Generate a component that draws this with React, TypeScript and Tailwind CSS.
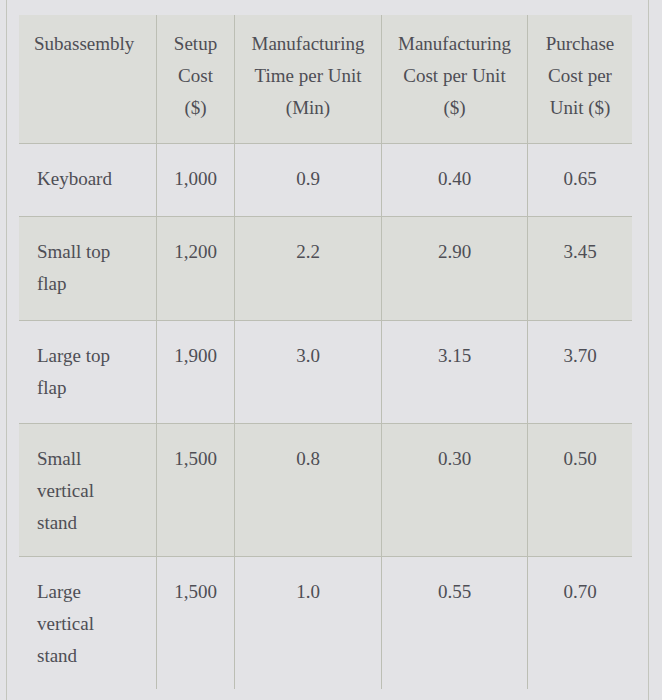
import React from "react";

const cols = ["w-[137px]", "w-[78px]", "w-[147px]", "w-[146px]", "w-[105px]"];

type Row = { cells: React.ReactNode[]; shaded: boolean; pb: string; last?: boolean };

const header: React.ReactNode[] = [
  "Subassembly",
  <>Setup<br />Cost<br />($)</>,
  <>Manufacturing<br />Time per Unit<br />(Min)</>,
  <>Manufacturing<br />Cost per Unit<br />($)</>,
  <>Purchase<br />Cost per<br />Unit ($)</>,
];

const rows: Row[] = [
  { cells: ["Keyboard", "1,000", "0.9", "0.40", "0.65"], shaded: false, pb: "pb-[21px]" },
  { cells: [<>Small top<br />flap</>, "1,200", "2.2", "2.90", "3.45"], shaded: true, pb: "pb-[20px]" },
  { cells: [<>Large top<br />flap</>, "1,900", "3.0", "3.15", "3.70"], shaded: false, pb: "pb-[19px]" },
  { cells: [<>Small<br />vertical<br />stand</>, "1,500", "0.8", "0.30", "0.50"], shaded: true, pb: "pb-[17px]" },
  { cells: [<>Large<br />vertical<br />stand</>, "1,500", "1.0", "0.55", "0.70"], shaded: false, pb: "pb-[17px]", last: true },
];

export default function App() {
  return (
    <div
      className="w-[662px] h-[700px] overflow-hidden bg-[#e3e3e6] text-[#4e4e55] pl-[6px]"
      style={{ fontFamily: '"Liberation Serif", "Times New Roman", serif' }}
    >
      <div className="w-[643px] h-[700px] border-l border-r border-[#c3c5bd] pl-[12px] pt-[15px]">
        <div className="flex flex-col w-[613px] text-[19px] leading-[32px]">
          <div className="flex bg-[#dcddd9] border-b border-[#bcbeb4]">
            {header.map((h, i) => (
              <div
                key={i}
                className={`${cols[i]} pt-[13px] pb-[19px] ${i === 0 ? "text-left pl-[15px]" : "text-center border-l border-[#bcbeb4]"}`}
              >
                {h}
              </div>
            ))}
          </div>
          {rows.map((r, ri) => (
            <div
              key={ri}
              className={`flex ${r.shaded ? "bg-[#dcddd9]" : ""} ${r.last ? "" : "border-b border-[#bcbeb4]"}`}
            >
              {r.cells.map((c, i) => (
                <div
                  key={i}
                  className={`${cols[i]} pt-[19px] ${r.pb} ${i === 0 ? "text-left pl-[18px]" : "text-center border-l border-[#bcbeb4]"}`}
                >
                  {c}
                </div>
              ))}
            </div>
          ))}
        </div>
      </div>
    </div>
  );
}
